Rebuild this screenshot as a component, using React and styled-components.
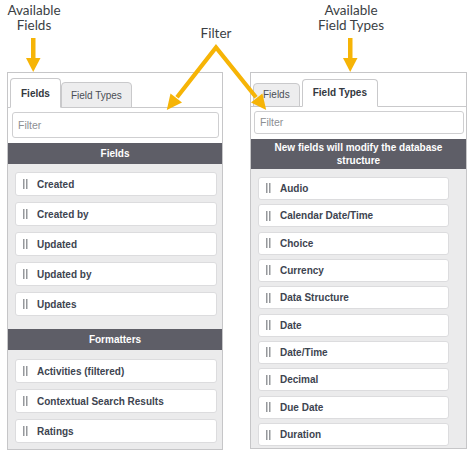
import React from 'react'
import styled, { createGlobalStyle } from 'styled-components';

const GlobalStyle = createGlobalStyle`
  html, body {
    margin: 0;
    padding: 0;
    background: #fff;
  }
  * {
    box-sizing: border-box;
  }
`

const ORANGE = '#f6b406';

const fieldItems = ['Created', 'Created by', 'Updated', 'Updated by', 'Updates'];
const formatterItems = ['Activities (filtered)', 'Contextual Search Results', 'Ratings'];
const typeItems = [
  'Audio', 'Calendar Date/Time', 'Choice', 'Currency', 'Data Structure',
  'Date', 'Date/Time', 'Decimal', 'Due Date', 'Duration',
];

const Grip = () => (
  <GripIcon width="5" height="10" viewBox="0 0 5 10">
    {[0, 2, 4, 6, 8].map((y) => (
      <React.Fragment key={y}>
        <rect x="0" y={y + 0.25} width="1.5" height="1.5" />
        <rect x="3" y={y + 0.25} width="1.5" height="1.5" />
      </React.Fragment>
    ))}
  </GripIcon>
)

const FieldRow = ({ label, compact }) => (
  <Item $compact={compact}>
    <Grip />
    <span>{label}</span>
  </Item>
)

const Arrows = () => (
  <Overlay width="471" height="455" viewBox="0 0 471 455">
    {/* Available Fields */}
    <rect x="31" y="38" width="4.5" height="21" fill={ORANGE} />
    <polygon points="26,58 40.5,58 33.2,72" fill={ORANGE} />

    {/* Available Field Types */}
    <rect x="348" y="38" width="4.5" height="21" fill={ORANGE} />
    <polygon points="343,58 357.5,58 350.2,72" fill={ORANGE} />

    {/* Filter */}
    <polyline
      points="177,97.2 216,47.5 256,97.2"
      fill="none"
      stroke={ORANGE}
      strokeWidth="4.2"
      strokeLinejoin="miter"
    />
    <polygon points="166.8,110 170.5,93.6 182,102.6" fill={ORANGE} />
    <polygon points="266.2,110 251,102.6 262.4,93.6" fill={ORANGE} />
  </Overlay>
)

const App = () => {
  return (
    <>
      <GlobalStyle />
      <Page>
        <Callout $left={4} $width={60}>Available<br />Fields</Callout>
        <Callout $left={194} $width={44} $top={26}>Filter</Callout>
        <Callout $left={311} $width={80}>Available<br />Field Types</Callout>

        <Panels>
          <Panel $width={216} $height={378}>
            <TabBar>
              <Tab $active>Fields</Tab>
              <Tab>Field Types</Tab>
            </TabBar>
            <FilterBox>
              <FilterInput placeholder="Filter" />
            </FilterBox>
            <SectionHeader>Fields</SectionHeader>
            <List $top={8} $bottom={13}>
              {fieldItems.map((f) => <FieldRow key={f} label={f} />)}
            </List>
            <SectionHeader>Formatters</SectionHeader>
            <List $top={9} $bottom={6}>
              {formatterItems.map((f) => <FieldRow key={f} label={f} />)}
            </List>
          </Panel>

          <Panel $width={217} $height={377}>
            <TabBar $compact>
              <Tab $compact>Fields</Tab>
              <Tab $active $compact>Field Types</Tab>
            </TabBar>
            <FilterBox $compact>
              <FilterInput $compact placeholder="Filter" />
            </FilterBox>
            <SectionHeader $tall>New fields will modify the database structure</SectionHeader>
            <List $top={8} $bottom={2} $right={17} $compact>
              {typeItems.map((f) => <FieldRow key={f} label={f} compact />)}
            </List>
          </Panel>
        </Panels>

        <Arrows />
      </Page>
    </>
  )
}

export default App;

const Page = styled.div`
  position: relative;
  width: 471px;
  height: 455px;
  overflow: hidden;
  background: #fff;
  font-family: "Liberation Sans", Arial, sans-serif;
`

const Callout = styled.div`
  position: absolute;
  top: ${(p) => p.$top ?? 3}px;
  left: ${(p) => p.$left}px;
  width: ${(p) => p.$width}px;
  text-align: center;
  font-family: Lato, "Open Sans", sans-serif;
  font-size: 13.5px;
  line-height: 15px;
  color: #3b3f44;
`

const Overlay = styled.svg`
  position: absolute;
  top: 0;
  left: 0;
  pointer-events: none;
`

const Panels = styled.div`
  display: flex;
  align-items: flex-start;
  gap: 27px;
  padding: 72px 0 0 7px;
`

const Panel = styled.div`
  width: ${(p) => p.$width}px;
  height: ${(p) => p.$height}px;
  display: flex;
  flex-direction: column;
  border: 1px solid #c6c6c8;
  background: #ebebec;
  overflow: hidden;
`

const TabBar = styled.div`
  display: flex;
  align-items: flex-end;
  gap: ${(p) => (p.$compact ? 2 : 0)}px;
  height: ${(p) => (p.$compact ? 35 : 38)}px;
  padding-left: 2px;
  background: #fff;
  border-bottom: 1px solid #c9c9cb;
`

const Tab = styled.div`
  display: flex;
  align-items: center;
  justify-content: center;
  height: ${(p) => (p.$active ? (p.$compact ? 28 : 30) : (p.$compact ? 24 : 26))}px;
  padding: 0 ${(p) => (p.$active ? 10 : 9)}px;
  margin-bottom: -1px;
  border: 1px solid #c9c9cb;
  border-bottom: ${(p) => (p.$active ? '1px solid #fff' : '1px solid #c9c9cb')};
  border-radius: 4px 4px 0 0;
  background: ${(p) => (p.$active ? '#fff' : '#ededee')};
  font-size: 10px;
  font-weight: ${(p) => (p.$active ? 700 : 400)};
  color: ${(p) => (p.$active ? '#333840' : '#4a4e55')};
`

const FilterBox = styled.div`
  background: #fff;
  padding: ${(p) => (p.$compact ? '4px 2px 5px 3px' : '4px 3px 5px 4px')};
`

const FilterInput = styled.input`
  display: block;
  width: 100%;
  height: ${(p) => (p.$compact ? 23 : 26)}px;
  padding: 0 5px;
  border: 1px solid #cfcfd1;
  border-radius: 3px;
  font-family: "Liberation Sans", Arial, sans-serif;
  font-size: 10.5px;
  color: #333;
  outline: none;

  &::placeholder {
    color: #8d8f93;
  }
`

const SectionHeader = styled.div`
  display: flex;
  align-items: center;
  justify-content: center;
  flex-shrink: 0;
  height: ${(p) => (p.$tall ? 30 : 21)}px;
  padding: 0 12px;
  background: #5e5e67;
  color: #fff;
  font-size: 10px;
  font-weight: 700;
  line-height: 13px;
  text-align: center;
`

const List = styled.div`
  display: flex;
  flex-direction: column;
  gap: ${(p) => (p.$compact ? 4.35 : 6)}px;
  padding: ${(p) => p.$top}px ${(p) => p.$right ?? 5}px ${(p) => p.$bottom}px 7px;
`

const Item = styled.div`
  display: flex;
  align-items: center;
  gap: ${(p) => (p.$compact ? 9 : 9)}px;
  height: ${(p) => (p.$compact ? 23 : 24)}px;
  padding-left: ${(p) => (p.$compact ? 7 : 7)}px;
  background: #fff;
  border: 1px solid #dcdcde;
  border-radius: 3px;
  font-size: 10px;
  font-weight: 700;
  color: #3d4450;
  white-space: nowrap;
`

const GripIcon = styled.svg`
  flex-shrink: 0;
  fill: #74777c;
`
